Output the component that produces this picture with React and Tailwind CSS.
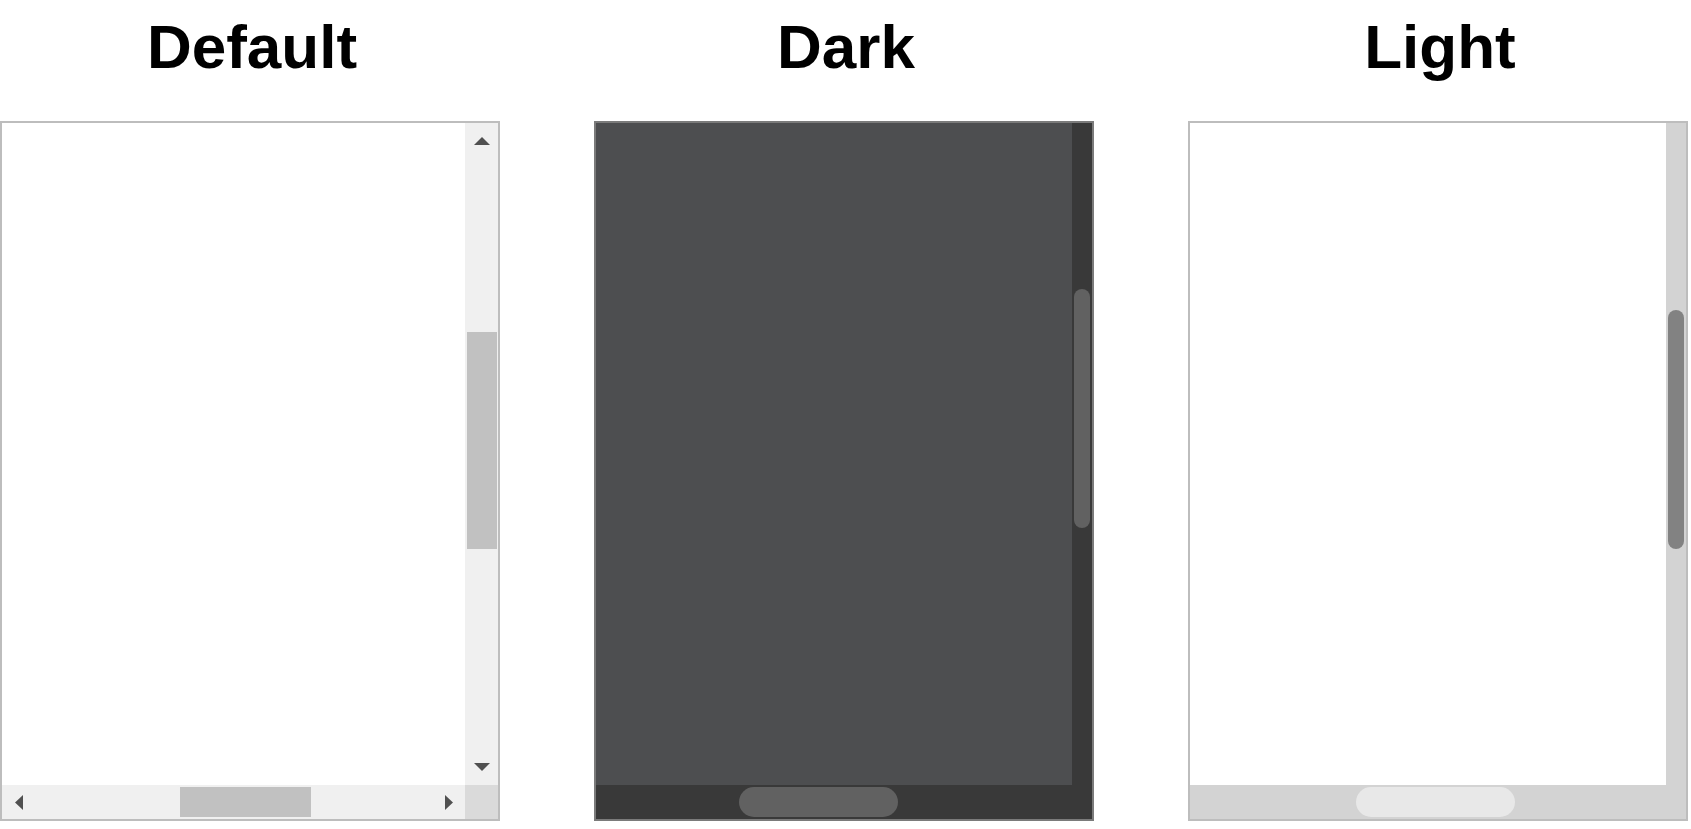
import React from 'react';

function Arrow({ dir }) {
  // small filled triangles used on the classic scrollbar buttons
  const pts = {
    up: '0,8 8,0 16,8',
    down: '0,0 16,0 8,8',
    left: '8,0 8,15 0,7.5',
    right: '0,0 0,15 8,7.5',
  }[dir];
  const vertical = dir === 'up' || dir === 'down';
  return (
    <svg width={vertical ? 16 : 8} height={vertical ? 8 : 15} viewBox={vertical ? '0 0 16 8' : '0 0 8 15'}>
      <polygon points={pts} fill="#505050" />
    </svg>
  );
}

function Column({ title, children }) {
  return (
    <div className="w-[500px] flex flex-col items-center">
      <h2 className="text-[62px] leading-[62px] font-bold text-black mt-[16px] ml-[4px]">{title}</h2>
      <div className="mt-[43px] w-[500px]">{children}</div>
    </div>
  );
}

function DefaultPane() {
  return (
    <div className="h-[700px] border-2 border-[#bdbdbd] bg-white grid grid-cols-[1fr_33px] grid-rows-[1fr_34px]">
      <div className="bg-white" />
      {/* vertical bar */}
      <div className="bg-[#f0f0f0] flex flex-col">
        <div className="h-[36px] flex items-center justify-center">
          <Arrow dir="up" />
        </div>
        <div className="mt-[173px] ml-[2px] w-[30px] h-[217px] bg-[#c1c1c1]" />
        <div className="flex-1" />
        <div className="h-[36px] flex items-center justify-center">
          <Arrow dir="down" />
        </div>
      </div>
      {/* horizontal bar */}
      <div className="bg-[#f0f0f0] flex items-center">
        <div className="w-[34px] h-full flex items-center justify-center">
          <Arrow dir="left" />
        </div>
        <div className="ml-[144px] w-[131px] h-[30px] bg-[#c1c1c1]" />
        <div className="flex-1" />
        <div className="w-[33px] h-full flex items-center justify-center">
          <Arrow dir="right" />
        </div>
      </div>
      <div className="bg-[#dadada]" />
    </div>
  );
}

function OverlayPane({ border, content, track, vThumb, hThumb, vTop, hLeft }) {
  return (
    <div className={`h-[700px] border-2 ${border} flex flex-col`}>
      <div className="flex-1 flex">
        <div className={`flex-1 ${content}`} />
        <div className={`w-[20px] ${track} flex flex-col items-center`}>
          <div className={`w-[16px] h-[239px] rounded-full ${vThumb}`} style={{ marginTop: vTop }} />
        </div>
      </div>
      <div className={`h-[34px] ${track} flex items-center`}>
        <div className={`w-[159px] h-[30px] rounded-full ${hThumb}`} style={{ marginLeft: hLeft }} />
      </div>
    </div>
  );
}

export default function App() {
  return (
    <div className="w-[1691px] h-[829px] bg-white overflow-hidden" style={{ fontFamily: '"Liberation Sans", Arial, sans-serif' }}>
      <div className="flex gap-[94px]">
        <Column title="Default">
          <DefaultPane />
        </Column>
        <Column title="Dark">
          <OverlayPane
            border="border-[#7b7b7b]"
            content="bg-[#4d4e50]"
            track="bg-[#393939]"
            vThumb="bg-[#616161]"
            hThumb="bg-[#616161]"
            vTop={166}
            hLeft={143}
          />
        </Column>
        <Column title="Light">
          <OverlayPane
            border="border-[#bdbdbd]"
            content="bg-white"
            track="bg-[#d3d3d3]"
            vThumb="bg-[#828282]"
            hThumb="bg-[#e8e8e8]"
            vTop={187}
            hLeft={166}
          />
        </Column>
      </div>
    </div>
  );
}
